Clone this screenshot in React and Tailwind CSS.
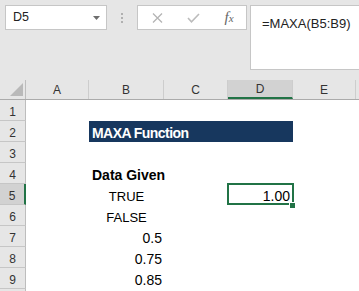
import React from "react";

const COLS = [
  { k: "A", w: "w-[63px]" },
  { k: "B", w: "w-[75px]" },
  { k: "C", w: "w-[64px]" },
  { k: "D", w: "w-[65px]" },
  { k: "E", w: "w-[63px]" },
];

function RowHead({ n, active }) {
  return (
    <div
      className={
        "w-[26px] h-[21px] shrink-0 flex items-center justify-center pt-[3px] text-[12px] text-[#333] border-b border-[#c6c6c6] " +
        (active
          ? "bg-[#d2d2d2] border-r-2 border-r-[#217346]"
          : "bg-[#e6e6e6] border-r border-r-[#bdbdbd]")
      }
    >
      {n}
    </div>
  );
}

function Cell({ w, children, align = "left", className = "" }) {
  const a =
    align === "right"
      ? "justify-end pr-[2px]"
      : align === "center"
      ? "justify-center"
      : "justify-start pl-[3px]";
  return (
    <div className={`${w} h-[21px] shrink-0 flex items-end pb-[2px] ${a} ${className}`}>
      {children}
    </div>
  );
}

function Row({ n, children, active }) {
  return (
    <div className="flex h-[21px]">
      <RowHead n={n} active={active} />
      <div className="flex flex-1 bg-white">{children}</div>
    </div>
  );
}

export default function App() {
  return (
    <div className="w-[359px] h-[291px] overflow-hidden bg-[#e6e6e6] font-['Liberation_Sans',Arial,sans-serif] text-black">
      {/* Formula bar */}
      <div className="flex h-[80px] pt-[5px] pl-[5px]">
        <div className="w-[102px] h-[25px] shrink-0 bg-white border border-[#c6c6c6] flex items-center justify-between pl-[7px] pr-[6px]">
          <span className="text-[12.5px] text-[#222] leading-none">D5</span>
          <svg width="7" height="4" viewBox="0 0 7 4">
            <path d="M0 0 L7 0 L3.5 4 Z" fill="#6e6e6e" />
          </svg>
        </div>
        <div className="w-[30px] h-[25px] shrink-0 flex flex-col items-center justify-center gap-[2px]">
          <div className="w-[2px] h-[2px] bg-[#b0b0b0]" />
          <div className="w-[2px] h-[2px] bg-[#b0b0b0]" />
          <div className="w-[2px] h-[2px] bg-[#b0b0b0]" />
        </div>
        <div className="w-[110px] h-[25px] shrink-0 bg-white border border-[#c6c6c6] flex items-center">
          <div className="w-[37px] flex justify-center pl-[2px]">
            <svg width="11" height="10" viewBox="0 0 11 10">
              <path d="M1 0.5 L10 9.5 M10 0.5 L1 9.5" stroke="#b4b4b4" strokeWidth="1.3" fill="none" />
            </svg>
          </div>
          <div className="w-[37px] flex justify-center">
            <svg width="13" height="10" viewBox="0 0 13 10">
              <path d="M1 5 L4.5 8.8 L12 1" stroke="#bcbcbc" strokeWidth="1.6" fill="none" />
            </svg>
          </div>
          <div className="w-[34px] flex justify-center">
            <span className="font-['Liberation_Serif',serif] italic text-[15px] text-[#666] leading-none">
              f<span className="text-[11px]">x</span>
            </span>
          </div>
        </div>
        <div className="w-[3px] shrink-0" />
        <div className="flex-1 h-[65px] bg-white border-l border-t border-b border-[#c6c6c6] pl-[11px] pt-[5px]">
          <span className="text-[13px] leading-[15px] text-[#222]">=MAXA(B5:B9)</span>
        </div>
      </div>

      {/* Column headers */}
      <div className="flex h-[20px] border-b border-[#ababab]">
        <div className="w-[26px] h-full shrink-0 border-r border-[#bdbdbd] relative">
          <svg className="absolute left-[10px] top-[3px]" width="13" height="13" viewBox="0 0 13 13">
            <path d="M13 0 L13 13 L0 13 Z" fill="#b9b9b9" />
          </svg>
        </div>
        {COLS.map((c) => (
          <div
            key={c.k}
            className={
              `${c.w} h-full shrink-0 flex items-center justify-center text-[12px] text-[#333] border-r border-[#cdcdcd] ` +
              (c.k === "D" ? "bg-[#d2d2d2] border-b-2 border-b-[#217346]" : "")
            }
          >
            {c.k}
          </div>
        ))}
        <div className="flex-1" />
      </div>

      {/* Grid */}
      <div className="flex flex-col">
        <Row n={1} />
        <Row n={2}>
          <Cell w="w-[63px]" />
          <div className="w-[204px] h-[21px] bg-[#17375e] flex items-end pb-[2px] pl-[3px]">
            <span className="text-[14px] leading-[14px] font-bold text-white tracking-[-0.55px]">
              MAXA Function
            </span>
          </div>
        </Row>
        <Row n={3} />
        <Row n={4}>
          <Cell w="w-[63px]" />
          <Cell w="w-[75px]">
            <span className="text-[14px] leading-[14px] font-bold whitespace-nowrap">Data Given</span>
          </Cell>
        </Row>
        <Row n={5} active>
          <Cell w="w-[63px]" />
          <Cell w="w-[75px]" align="center">
            <span className="text-[13px] leading-[13px]">TRUE</span>
          </Cell>
          <Cell w="w-[64px]" />
          <div className="w-[65px] h-[21px] shrink-0 relative flex items-end justify-end pb-[2px] pr-[3px]">
            <span className="text-[14px] leading-[14px]">1.00</span>
            <div className="absolute -left-[1px] -top-[1px] w-[67px] h-[22px] border-2 border-[#217346]" />
            <div className="absolute left-[61px] top-[18px] w-[7px] h-[7px] bg-[#217346] border border-white" />
          </div>
        </Row>
        <Row n={6}>
          <Cell w="w-[63px]" />
          <Cell w="w-[75px]" align="center">
            <span className="text-[13px] leading-[13px]">FALSE</span>
          </Cell>
        </Row>
        <Row n={7}>
          <Cell w="w-[63px]" />
          <Cell w="w-[75px]" align="right">
            <span className="text-[14px] leading-[14px]">0.5</span>
          </Cell>
        </Row>
        <Row n={8}>
          <Cell w="w-[63px]" />
          <Cell w="w-[75px]" align="right">
            <span className="text-[14px] leading-[14px]">0.75</span>
          </Cell>
        </Row>
        <Row n={9}>
          <Cell w="w-[63px]" />
          <Cell w="w-[75px]" align="right">
            <span className="text-[14px] leading-[14px]">0.85</span>
          </Cell>
        </Row>
        <Row n="" />
      </div>
    </div>
  );
}
